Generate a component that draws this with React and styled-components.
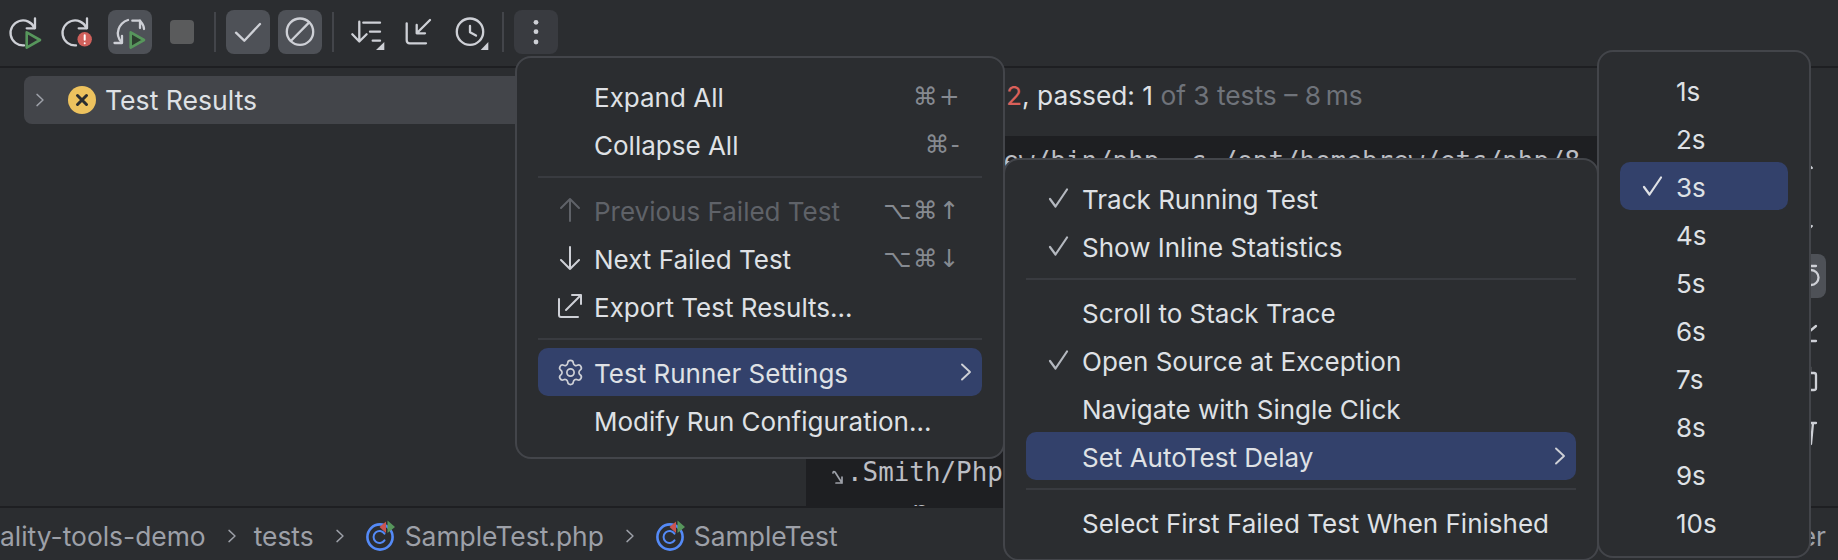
import React from 'react';
import styled, { createGlobalStyle } from 'styled-components';
import { Settings } from 'lucide-react';

const GlobalStyle = createGlobalStyle`
  html, body {
    margin: 0;
    padding: 0;
    background: #2b2d30;
  }
`;

const Window = styled.div`
  position: relative;
  width: 1838px;
  height: 560px;
  overflow: hidden;
  display: flex;
  flex-direction: column;
  background: #2b2d30;
  color: #dfe1e5;
  font-family: Inter, "DejaVu Sans", sans-serif;
  font-size: 26px;
`;

const Toolbar = styled.div`
  display: flex;
  align-items: center;
  gap: 8px;
  flex: 0 0 68px;
  box-sizing: border-box;
  padding: 0 0 2px 4px;
  border-bottom: 2px solid #1e1f22;
`;

const ToolButton = styled.div`
  width: 44px;
  height: 44px;
  border-radius: 8px;
  display: flex;
  align-items: center;
  justify-content: center;
  background: ${(p) => (p.$on ? '#4e5157' : p.$soft ? '#393b40' : 'transparent')};
`;

const ToolSep = styled.div`
  width: 2px;
  height: 40px;
  margin: 0 2px;
  background: #43454a;
`;

const StopSquare = styled.div`
  width: 24px;
  height: 24px;
  border-radius: 4px;
  background: #5a5b5c;
`;

const Main = styled.div`
  flex: 1;
  display: flex;
  min-height: 0;
`;

const TreePane = styled.div`
  flex: 0 0 806px;
  box-sizing: border-box;
  padding: 8px 24px;
`;

const TreeRow = styled.div`
  height: 48px;
  border-radius: 8px;
  background: #43454a;
  display: flex;
  align-items: center;
  padding-left: 10px;
`;

const TreeStatus = styled.span`
  display: flex;
  margin: 0 9px 0 22px;
`;

const TreeLabel = styled.span`
  font-size: 26.6px;
`;

const RightPane = styled.div`
  flex: 1;
  display: flex;
  flex-direction: column;
  min-width: 0;
`;

const Summary = styled.div`
  flex: 0 0 68px;
  display: flex;
  align-items: center;
  padding: 0 0 14px 43px;
  box-sizing: border-box;
  font-size: 26.3px;
  white-space: pre;
`;

const Failed = styled.span`
  color: #d9605a;
`;

const Muted = styled.span`
  color: #6f737a;
`;

const ConsoleRow = styled.div`
  flex: 1;
  display: flex;
  min-height: 0;
`;

const Console = styled.div`
  flex: 1;
  min-width: 0;
  overflow: hidden;
  background: #1e1f22;
  box-sizing: border-box;
  padding: 6px 0 0 26px;
  font-family: "DejaVu Sans Mono", "Liberation Mono", monospace;
  font-size: 25.9px;
  color: #bcbec4;
  white-space: pre;
`;

const ConsoleLine = styled.div`
  height: 38.8px;
  display: flex;
  align-items: center;
`;

const WrapMark = styled.span`
  display: flex;
  margin: 12px 3px 0 0;
`;

const Gutter = styled.div`
  flex: 0 0 58px;
  box-sizing: border-box;
  padding: 14px 0 0 2px;
  display: flex;
  flex-direction: column;
  gap: 8px;
`;

const StatusBar = styled.div`
  flex: 0 0 54px;
  box-sizing: border-box;
  border-top: 2px solid #1e1f22;
  display: flex;
  align-items: center;
  color: #9da0a8;
  font-size: 26.4px;
  padding: 4px 12px 0 0;
`;

const Crumb = styled.span`
  display: flex;
  align-items: center;
  margin-left: ${(p) => p.$gap || 0}px;
`;

const CrumbSep = styled.span`
  display: flex;
  margin: 0 ${(p) => p.$right || 20}px 0 20px;
`;

const StatusRight = styled.span`
  margin-left: auto;
`;

const Popup = styled.div`
  position: absolute;
  top: ${(p) => p.$top}px;
  left: ${(p) => p.$left}px;
  width: ${(p) => p.$width}px;
  box-sizing: border-box;
  padding: 14px 21px ${(p) => p.$bottom}px;
  background: #2b2d30;
  border: 2px solid #43454a;
  border-radius: 16px;
`;

const Item = styled.div`
  height: 48px;
  display: flex;
  align-items: center;
  border-radius: 10px;
  background: ${(p) => (p.$active ? '#33416b' : 'transparent')};
  color: ${(p) => (p.$disabled ? '#5f6268' : '#dfe1e5')};
`;

const ItemIcon = styled.span`
  flex: 0 0 40px;
  margin: 0 3px 0 12px;
  display: flex;
  align-items: center;
  justify-content: center;
`;

const ItemText = styled.span`
  flex: 1;
  padding: 2px 0 0 1px;
  white-space: nowrap;
`;

const Shortcut = styled.span`
  margin-right: 21px;
  color: #868a91;
  font-family: "DejaVu Sans", Inter, sans-serif;
  font-size: 24.5px;
  letter-spacing: 1.5px;
`;

const Arrow = styled.span`
  display: flex;
  margin-right: 8px;
`;

const Divider = styled.div`
  height: 2px;
  margin: 8px 0;
  background: #393b40;
`;

const Glyph = ({ w = 44, h = 44, box, stroke = '#ced0d6', sw = 2.3, children }) => (
  <svg
    width={w}
    height={h}
    viewBox={box || `0 0 ${w} ${h}`}
    fill="none"
    stroke={stroke}
    strokeWidth={sw}
    strokeLinecap="round"
    strokeLinejoin="round"
  >
    {children}
  </svg>
);

const Play = ({ fill = '#2b2d30' }) => (
  <path d="M22.7 22.3 L36 30 L22.7 37.7 Z" stroke="#57965c" strokeWidth="2.6" fill={fill} />
);

const RerunArc = () => (
  <>
    <path d="M30.5 18 A12.5 12.5 0 1 0 20 35.4" />
    <path d="M31 8.3 V18.3 H22.7" />
  </>
);

const Corner = ({ x = 32 }) => (
  <path d={`M${x} 40 H40.3 V32 Z`} fill="#ced0d6" stroke="none" />
);

const Chevron = ({ color = '#ced0d6', size = 16 }) => (
  <Glyph w={size} h={size + 4} box="0 0 16 20" stroke={color} sw={1.9}>
    <path d="M4 2.5 L12 10 L4 17.5" />
  </Glyph>
);

const Check = ({ color = '#b4b8bf' }) => (
  <Glyph w={24} h={24} stroke={color} sw={2.2}>
    <path d="M4 13 L9.5 20.5 L21 3.5" />
  </Glyph>
);

const ClassIcon = () => (
  <Glyph w={30} h={34} box="0 -4 30 34" stroke="#548af7" sw={2.6}>
    <circle cx="14" cy="14" r="12.6" />
    <path d="M18.5 10.6 A6 6 0 1 0 18.5 17.4" strokeWidth="2" />
    <path d="M13.5 4 L20 -1.5 V10 Z" fill="#c75450" stroke="none" />
    <path d="M29 4 L21.5 -2.5 V10 Z" fill="#57965c" stroke="none" />
  </Glyph>
);

const menuOne = [
  { label: 'Expand All', keys: '⌘+' },
  { label: 'Collapse All', keys: '⌘-' },
  { sep: true },
  { label: 'Previous Failed Test', keys: '⌥⌘↑', icon: 'up', disabled: true },
  { label: 'Next Failed Test', keys: '⌥⌘↓', icon: 'down' },
  { label: 'Export Test Results...', icon: 'export' },
  { sep: true },
  { label: 'Test Runner Settings', icon: 'gear', active: true, more: true },
  { label: 'Modify Run Configuration...' },
];

const menuTwo = [
  { label: 'Track Running Test', icon: 'check' },
  { label: 'Show Inline Statistics', icon: 'check' },
  { sep: true },
  { label: 'Scroll to Stack Trace' },
  { label: 'Open Source at Exception', icon: 'check' },
  { label: 'Navigate with Single Click' },
  { label: 'Set AutoTest Delay', active: true, more: true },
  { sep: true },
  { label: 'Select First Failed Test When Finished' },
];

const menuThree = ['1s', '2s', '3s', '4s', '5s', '6s', '7s', '8s', '9s', '10s'].map((label) =>
  label === '3s' ? { label, icon: 'brightCheck', active: true } : { label }
);

const itemIcons = {
  up: (
    <Glyph w={24} h={26} stroke="#5f6268" sw={2}>
      <path d="M12 2 V24 M3 11 L12 2 L21 11" />
    </Glyph>
  ),
  down: (
    <Glyph w={24} h={26} sw={2}>
      <path d="M12 2 V24 M3 15 L12 24 L21 15" />
    </Glyph>
  ),
  export: (
    <Glyph w={26} h={26} sw={2}>
      <path d="M2 6 V22 Q2 24 4 24 H21 M9 17 L24 2 M15 2 H24 V11" />
    </Glyph>
  ),
  gear: <Settings size={29} color="#ced0d6" strokeWidth={1.4} />,
  check: <Check />,
  brightCheck: <Check color="#dfe1e5" />,
};

const Menu = ({ items, ...rest }) => (
  <Popup {...rest}>
    {items.map((it, i) =>
      it.sep ? (
        <Divider key={i} />
      ) : (
        <Item key={it.label} $active={it.active} $disabled={it.disabled}>
          <ItemIcon>{itemIcons[it.icon]}</ItemIcon>
          <ItemText>{it.label}</ItemText>
          {it.keys && <Shortcut>{it.keys}</Shortcut>}
          {it.more && (
            <Arrow>
              <Chevron />
            </Arrow>
          )}
        </Item>
      )
    )}
  </Popup>
);

const App = () => (
  <Window>
    <GlobalStyle />
    <Toolbar>
      <ToolButton>
        <Glyph>
          <RerunArc />
          <Play />
        </Glyph>
      </ToolButton>
      <ToolButton>
        <Glyph>
          <RerunArc />
          <circle cx="28.7" cy="29.3" r="7.2" fill="#d0605b" stroke="none" />
          <path d="M28.7 25.3 V29.8 M28.7 33.2 V33.3" stroke="#fff" strokeWidth="2" />
        </Glyph>
      </ToolButton>
      <ToolButton $on>
        <Glyph>
          <path d="M20 10 C11 13 6 24 13.7 32.5" />
          <path d="M6.5 33 H14 V25.8" />
          <path d="M24.3 10.7 H32 V18" />
          <path d="M32 10.7 C34 13 36 15 36 19" />
          <Play fill="#2c3e2e" />
        </Glyph>
      </ToolButton>
      <ToolButton>
        <StopSquare />
      </ToolButton>
      <ToolSep />
      <ToolButton $on>
        <Glyph>
          <path d="M10 22.7 L18.3 30.7 L34 14" />
        </Glyph>
      </ToolButton>
      <ToolButton $on>
        <Glyph>
          <circle cx="22" cy="21.7" r="13.2" />
          <path d="M12.8 31 L31.2 12.4" />
        </Glyph>
      </ToolButton>
      <ToolSep />
      <ToolButton>
        <Glyph>
          <path d="M15.3 11.7 V31 M8.3 24.3 L15.3 31.5 L22.6 24.3" />
          <path d="M19.3 12.7 H36 M26 21.7 H36 M28.7 30.7 H36" />
          <Corner />
        </Glyph>
      </ToolButton>
      <ToolButton>
        <Glyph>
          <path d="M10.7 13.3 V30.3 Q10.7 33.3 13.7 33.3 H30" />
          <path d="M34 10 L20.7 23.3 M20.7 15 V23.3 H29" />
        </Glyph>
      </ToolButton>
      <ToolButton>
        <Glyph>
          <circle cx="22" cy="21.7" r="13.2" />
          <path d="M22 16 V22.3 L28 25.6" />
          <Corner x={32.7} />
        </Glyph>
      </ToolButton>
      <ToolSep />
      <ToolButton $soft>
        <Glyph>
          <g fill="#ced0d6" stroke="none">
            <circle cx="22" cy="12.3" r="2.4" />
            <circle cx="22" cy="21.7" r="2.4" />
            <circle cx="22" cy="32" r="2.4" />
          </g>
        </Glyph>
      </ToolButton>
    </Toolbar>

    <Main>
      <TreePane>
        <TreeRow>
          <Chevron color="#9da0a8" size={12} />
          <TreeStatus>
            <Glyph w={28} h={28} stroke="none">
              <circle cx="14" cy="14" r="14" fill="#edc25e" />
              <path d="M9.5 9.5 L18.5 18.5 M18.5 9.5 L9.5 18.5" stroke="#2b2d30" strokeWidth="3" />
            </Glyph>
          </TreeStatus>
          <TreeLabel>Test Results</TreeLabel>
        </TreeRow>
      </TreePane>
      <RightPane>
        <Summary>
          Tests failed: <Failed>2</Failed>, passed: 1<Muted> of 3 tests – 8{'\u2009'}ms</Muted>
        </Summary>
        <ConsoleRow>
          <Console>
            <ConsoleLine>/opt/homebrew/bin/php -c /opt/homebrew/etc/php/8</ConsoleLine>
            <ConsoleLine />
            <ConsoleLine />
            <ConsoleLine />
            <ConsoleLine />
            <ConsoleLine />
            <ConsoleLine />
            <ConsoleLine />
            <ConsoleLine>
              <WrapMark>
                <Glyph w={12} h={16} box="0 0 12 16" stroke="#9da0a8" sw={1.7}>
                  <path d="M1 3 Q1 1 3 2 L10 13 M10 7 V13 H4" />
                </Glyph>
              </WrapMark>
              .Smith/Php
            </ConsoleLine>
            <ConsoleLine>{'     r:'}</ConsoleLine>
          </Console>
          <Gutter>
            <ToolButton>
              <Glyph>
                <path d="M22 10 V34 M14.2 18 L22 10 L29.8 18" />
              </Glyph>
            </ToolButton>
            <ToolButton>
              <Glyph>
                <path d="M22 10 V32 M14.2 24 L22 32 L29.8 24" />
              </Glyph>
            </ToolButton>
            <ToolButton $on>
              <Glyph>
                <path d="M10 12 H34 M10 16 H29 A7.5 7.5 0 0 1 29 31 H24 M10 31 H16" />
              </Glyph>
            </ToolButton>
            <ToolButton>
              <Glyph>
                <path d="M22 8 V30 M10 20 L22 30 L34 20 M10 35 H34" />
              </Glyph>
            </ToolButton>
            <ToolButton>
              <Glyph>
                <path d="M16 15 V9 H28 V15" />
                <rect x="10" y="15" width="24" height="17" rx="2" />
              </Glyph>
            </ToolButton>
            <ToolButton>
              <Glyph>
                <path d="M9 13 H34 M17 13 V9 H27 V13 M12 13 L14 34 H29 L31 13 M20 18 V28 M25 18 V28" />
              </Glyph>
            </ToolButton>
          </Gutter>
        </ConsoleRow>
      </RightPane>
    </Main>

    <StatusBar>
      <Crumb>ality-tools-demo</Crumb>
      <CrumbSep $right={16}>
        <Chevron color="#9da0a8" size={12} />
      </CrumbSep>
      <Crumb>tests</Crumb>
      <CrumbSep>
        <Chevron color="#9da0a8" size={12} />
      </CrumbSep>
      <ClassIcon />
      <Crumb $gap={9}>SampleTest.php</Crumb>
      <CrumbSep>
        <Chevron color="#9da0a8" size={12} />
      </CrumbSep>
      <ClassIcon />
      <Crumb $gap={8}>SampleTest</Crumb>
      <StatusRight>Composer</StatusRight>
    </StatusBar>

    <Menu items={menuOne} $top={56} $left={515} $width={490} $bottom={13} />
    <Menu items={menuTwo} $top={158} $left={1003} $width={596} $bottom={13} />
    <Menu items={menuThree} $top={50} $left={1597} $width={214} $bottom={10} />
  </Window>
);

export default App;
